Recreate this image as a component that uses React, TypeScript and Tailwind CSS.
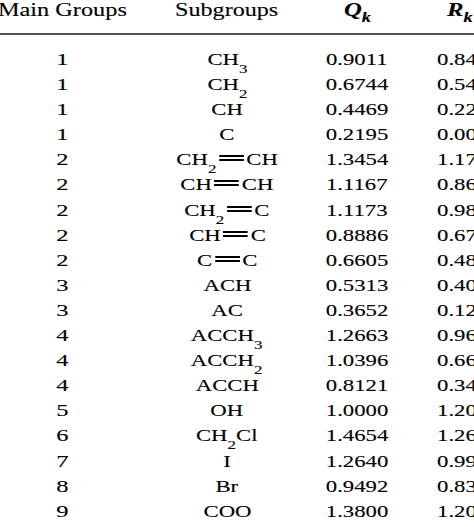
import React from "react";

const Sub = ({ children }: { children: React.ReactNode }) => (
  <span className="relative top-[8px] text-[13px]">{children}</span>
);

const Bond = () => (
  <span className="inline-block w-[19px] h-[6px] border-y-2 border-black mx-[2px] mb-[4px] align-baseline" />
);

const rows: { g: string; sub: React.ReactNode; q: string; r: string }[] = [
  { g: "1", sub: <>CH<Sub>3</Sub></>, q: "0.9011", r: "0.848" },
  { g: "1", sub: <>CH<Sub>2</Sub></>, q: "0.6744", r: "0.540" },
  { g: "1", sub: <>CH</>, q: "0.4469", r: "0.228" },
  { g: "1", sub: <>C</>, q: "0.2195", r: "0.000" },
  { g: "2", sub: <>CH<Sub>2</Sub><Bond />CH</>, q: "1.3454", r: "1.176" },
  { g: "2", sub: <>CH<Bond />CH</>, q: "1.1167", r: "0.867" },
  { g: "2", sub: <>CH<Sub>2</Sub><Bond />C</>, q: "1.1173", r: "0.988" },
  { g: "2", sub: <>CH<Bond />C</>, q: "0.8886", r: "0.676" },
  { g: "2", sub: <>C<Bond />C</>, q: "0.6605", r: "0.485" },
  { g: "3", sub: <>ACH</>, q: "0.5313", r: "0.400" },
  { g: "3", sub: <>AC</>, q: "0.3652", r: "0.120" },
  { g: "4", sub: <>ACCH<Sub>3</Sub></>, q: "1.2663", r: "0.968" },
  { g: "4", sub: <>ACCH<Sub>2</Sub></>, q: "1.0396", r: "0.660" },
  { g: "4", sub: <>ACCH</>, q: "0.8121", r: "0.348" },
  { g: "5", sub: <>OH</>, q: "1.0000", r: "1.200" },
  { g: "6", sub: <>CH<Sub>2</Sub>Cl</>, q: "1.4654", r: "1.264" },
  { g: "7", sub: <>I</>, q: "1.2640", r: "0.992" },
  { g: "8", sub: <>Br</>, q: "0.9492", r: "0.832" },
  { g: "9", sub: <>COO</>, q: "1.3800", r: "1.200" },
];

export default function App() {
  return (
    <div className="w-[474px] h-[527px] overflow-hidden bg-white text-black [-webkit-text-stroke:0.12px_#000] font-['Liberation_Serif',serif]">
      {/* header */}
      <div className="grid grid-cols-[124px_206px_54px_90px] h-[33px] text-[19px] leading-[20px]">
        <div className="flex justify-center">
          <span className="inline-block whitespace-nowrap scale-x-[1.28]">Main Groups</span>
        </div>
        <div className="flex justify-center">
          <span className="inline-block whitespace-nowrap scale-x-[1.27]">Subgroups</span>
        </div>
        <div className="flex justify-center">
          <span className="inline-block whitespace-nowrap italic font-bold scale-x-[1.3]">
            Q<span className="relative top-[6px] text-[14px]">k</span>
          </span>
        </div>
        <div className="flex pl-[63px]">
          <span className="inline-block whitespace-nowrap italic font-bold origin-left scale-x-[1.3]">
            R<span className="relative top-[6px] text-[14px]">k</span>
          </span>
        </div>
      </div>
      <div className="h-[2px] bg-[#555]" />

      <div className="mt-[12px] text-[17.5px] leading-[25.1px]">
        {rows.map((row, i) => (
          <div key={i} className="grid grid-cols-[124px_206px_54px_90px] h-[25.1px]">
            <div className="flex justify-center">
              <span className="inline-block scale-x-[1.4]">{row.g}</span>
            </div>
            <div className="flex justify-center">
              <span className="inline-block whitespace-nowrap scale-x-[1.3]">{row.sub}</span>
            </div>
            <div className="flex justify-center">
              <span className="inline-block scale-x-[1.3]">{row.q}</span>
            </div>
            <div className="flex pl-[53px]">
              <span className="inline-block whitespace-nowrap origin-left scale-x-[1.3]">{row.r}</span>
            </div>
          </div>
        ))}
      </div>
    </div>
  );
}
